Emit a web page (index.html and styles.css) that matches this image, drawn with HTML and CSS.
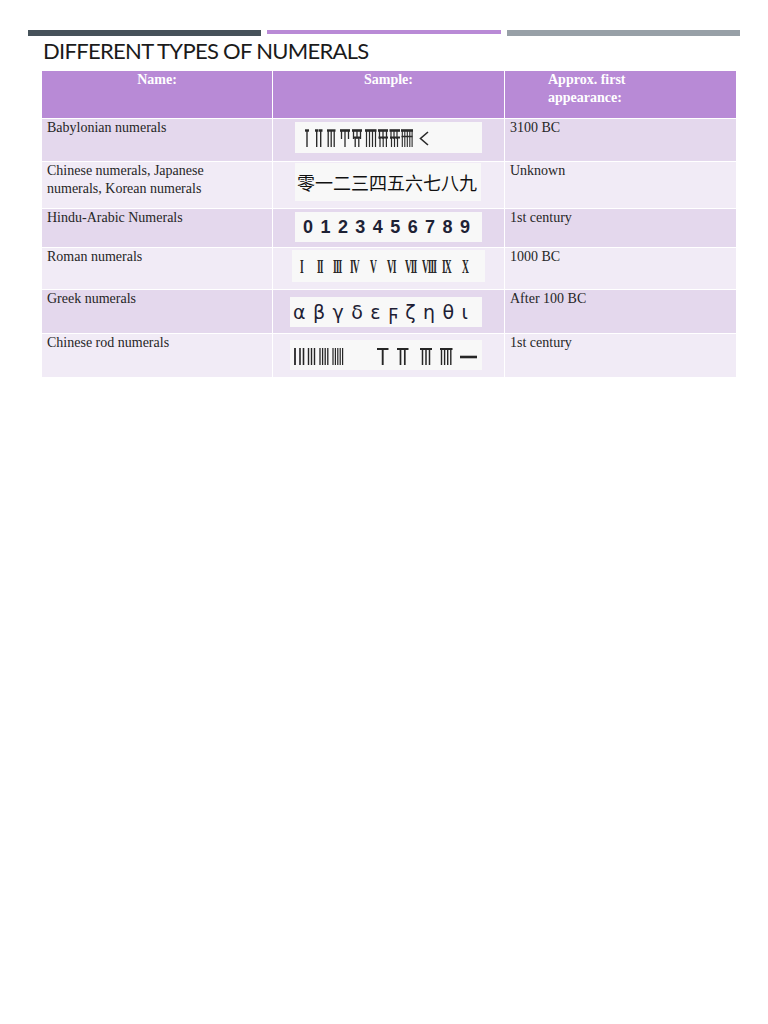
FILE: index.html
```html
<!DOCTYPE html>
<html lang="en">
<head>
<meta charset="utf-8">
<title>Different Types of Numerals</title>
<link rel="stylesheet" href="styles.css">
</head>
<body>
<div class="bars">
  <div class="bar bar-dark"></div>
  <div class="bar bar-purple"></div>
  <div class="bar bar-gray"></div>
</div>
<h1 class="title">DIFFERENT TYPES OF NUMERALS</h1>
<table class="numerals">
  <colgroup>
    <col class="c1"><col class="c2"><col class="c3">
  </colgroup>
  <thead>
    <tr class="head">
      <th class="h-center">Name:</th>
      <th class="h-center">Sample:</th>
      <th class="h-left">Approx. first<br>appearance:</th>
    </tr>
  </thead>
  <tbody>
    <tr class="r1 odd">
      <td class="name">Babylonian numerals</td>
      <td class="sample">
        <div class="box box-bab">
          <svg width="187" height="31" viewBox="0 0 187 31" class="glyph-svg">
            <g stroke="#2a2a2a" fill="none">
              <path d="M10 8.5h4" stroke-width="2.4"/><path d="M12 8v17" stroke-width="1.4"/>
              <path d="M20 8.5h3.5M24 8.5h3.5" stroke-width="2.4"/><path d="M21.7 8v17M25.7 8v17" stroke-width="1.4"/>
              <path d="M32 8.5h8.5" stroke-width="2.4"/><path d="M33.2 8v17M36.2 8v17M39.2 8v17" stroke-width="1.3"/>
              <path d="M45 8.5h10" stroke-width="2.6"/><path d="M46.5 8v9M50 8v17M53.5 8v9" stroke-width="1.3"/>
              <path d="M57 8.5h10" stroke-width="2.6"/><path d="M58.5 8v9M62 8v9M65.5 8v9" stroke-width="1.3"/><path d="M59 15.5h6" stroke-width="2"/><path d="M60.2 15v10M63.8 15v10" stroke-width="1.3"/>
              <path d="M70 8.5h11.5" stroke-width="2.6"/><path d="M71.5 8v17M74.5 8v17M77.5 8v17M80.5 8v17" stroke-width="1.2"/>
              <path d="M83 8.5h10" stroke-width="2.6"/><path d="M84.5 8v9M88 8v9M91.5 8v9" stroke-width="1.3"/><path d="M83.5 15.5h9.5" stroke-width="2"/><path d="M85 15v10M88.2 15v10M91.4 15v10" stroke-width="1.2"/>
              <path d="M94.5 8.5h10.5" stroke-width="2.6"/><path d="M96 8v9M99 8v9M102 8v9" stroke-width="1.2"/><path d="M95 15.5h10" stroke-width="2"/><path d="M96.5 15v10M99.5 15v10M102.5 15v10" stroke-width="1.2"/>
              <path d="M106 8.5h12" stroke-width="2.6"/><path d="M107.3 8v17M109.8 8v17M112.3 8v17M114.8 8v17M117.1 8v17" stroke-width="1.1"/><path d="M106.5 14.5h11" stroke-width="1.5"/>
              <path d="M133 10l-7.5 6.5 7.5 6.5" stroke-width="1.6"/>
            </g>
          </svg>
        </div>
      </td>
      <td class="date">3100 BC</td>
    </tr>
    <tr class="r2 even">
      <td class="name name-wrap">Chinese numerals, Japanese numerals, Korean numerals</td>
      <td class="sample">
        <div class="box box-cjk">
          <div class="glyphs glyphs-cjk"><span>零</span><span>一</span><span>二</span><span>三</span><span>四</span><span>五</span><span>六</span><span>七</span><span>八</span><span>九</span></div>
        </div>
      </td>
      <td class="date">Unknown</td>
    </tr>
    <tr class="r3 odd">
      <td class="name">Hindu-Arabic Numerals</td>
      <td class="sample">
        <div class="box box-arabic">
          <div class="glyphs glyphs-arabic"><span>0</span><span>1</span><span>2</span><span>3</span><span>4</span><span>5</span><span>6</span><span>7</span><span>8</span><span>9</span></div>
        </div>
      </td>
      <td class="date">1st century</td>
    </tr>
    <tr class="r4 even">
      <td class="name">Roman numerals</td>
      <td class="sample">
        <div class="box box-roman">
          <svg width="193" height="32" viewBox="0 0 193 32" class="glyph-svg">
            <g class="roman-text" fill="#262626" transform="scale(0.5 1)">
              <text x="16" y="23">I</text>
              <text x="50" y="23">II</text>
              <text x="82" y="23">III</text>
              <text x="116" y="23">IV</text>
              <text x="156" y="23">V</text>
              <text x="190" y="23">VI</text>
              <text x="226" y="23">VII</text>
              <text x="260" y="23">VIII</text>
              <text x="300" y="23">IX</text>
              <text x="340" y="23">X</text>
            </g>
          </svg>
        </div>
      </td>
      <td class="date">1000 BC</td>
    </tr>
    <tr class="r5 odd">
      <td class="name">Greek numerals</td>
      <td class="sample">
        <div class="box box-greek">
          <div class="glyphs glyphs-greek"><span>α</span><span>β</span><span>γ</span><span>δ</span><span>ε</span><span class="digamma">ϝ</span><span>ζ</span><span>η</span><span>θ</span><span>ι</span></div>
        </div>
      </td>
      <td class="date">After 100 BC</td>
    </tr>
    <tr class="r6 even">
      <td class="name">Chinese rod numerals</td>
      <td class="sample">
        <div class="box box-rod">
          <svg width="192" height="30" viewBox="0 0 192 30" class="glyph-svg">
            <g stroke="#262626" fill="none">
              <path d="M5 8v17" stroke-width="1.8"/>
              <path d="M10 8v17M13.5 8v17" stroke-width="1.6"/>
              <path d="M18.5 8v17M21.5 8v17M24.5 8v17" stroke-width="1.4"/>
              <path d="M30 8v17M32.6 8v17M35.2 8v17M37.8 8v17" stroke-width="1.3"/>
              <path d="M43 8v17M45.4 8v17M47.8 8v17M50.2 8v17M52.6 8v17" stroke-width="1.2"/>
              <path d="M87 9h11.5" stroke-width="2"/><path d="M92.7 9v16" stroke-width="1.9"/>
              <path d="M107 9h11.5" stroke-width="2"/><path d="M110.5 9v16M114.8 9v16" stroke-width="1.7"/>
              <path d="M130 9h12" stroke-width="2"/><path d="M132.5 9v16M136 9v16M139.5 9v16" stroke-width="1.5"/>
              <path d="M150 9h12.5" stroke-width="2"/><path d="M151.5 9v16M154.6 9v16M157.7 9v16M160.8 9v16" stroke-width="1.4"/>
              <path d="M170 17h17" stroke-width="2.6"/>
            </g>
          </svg>
        </div>
      </td>
      <td class="date">1st century</td>
    </tr>
  </tbody>
</table>
</body>
</html>
```

FILE: styles.css
```css
html, body {
  margin: 0;
  padding: 0;
  background: #ffffff;
}

body {
  width: 768px;
  min-height: 1024px;
  font-family: "Liberation Serif", "Times New Roman", serif;
}

.bars {
  display: flex;
  align-items: flex-start;
  gap: 6px;
  padding: 30px 0 0 28px;
  height: 6px;
}

.bar {
  width: 233px;
  height: 6px;
}

.bar-dark {
  background: #46525a;
}

.bar-purple {
  width: 234px;
  height: 4px;
  background: #b98ad6;
}

.bar-gray {
  background: #98a0a7;
}

.title {
  margin: 0 0 0 43px;
  font-family: "Lato", "Open Sans", sans-serif;
  font-weight: 400;
  font-size: 22px;
  line-height: 29px;
  letter-spacing: -0.7px;
  color: #1b1b1b;
}

.numerals {
  margin: 5px 0 0 41px;
  border-collapse: separate;
  border-spacing: 1px;
  table-layout: fixed;
  width: 696px;
  font-size: 14px;
  line-height: 18px;
}

.c1 { width: 230px; }
.c2 { width: 231px; }
.c3 { width: 231px; }

.numerals th,
.numerals td {
  padding: 0 5px;
  vertical-align: top;
}

.head th {
  background: #b88ad6;
  color: #ffffff;
  font-weight: 700;
  height: 47px;
}

.h-center {
  text-align: center;
}

.h-left {
  text-align: left;
}

.numerals th.h-left {
  padding-left: 43px;
}

.odd td {
  background: #e4d8ed;
}

.even td {
  background: #f1ebf6;
}

.numerals td {
  color: #262626;
}

.numerals td.name-wrap {
  padding-right: 20px;
}

.r1 td { height: 42px; }
.r2 td { height: 46px; }
.r3 td { height: 38px; }
.r4 td { height: 41px; }
.r5 td { height: 43px; }
.r6 td { height: 43px; }

.numerals td.sample {
  padding: 0;
}

.box {
  background: #f8f8f8;
  display: flex;
  align-items: center;
  overflow: hidden;
}

.glyph-svg {
  display: block;
}

.box-bab {
  margin: 3px 0 0 22px;
  width: 187px;
  height: 31px;
}

.box-cjk {
  margin: 1px 0 0 22px;
  width: 186px;
  height: 38px;
}

.box-arabic {
  margin: 3px 0 0 22px;
  width: 187px;
  height: 30px;
}

.box-roman {
  margin: 2px 0 0 19px;
  width: 193px;
  height: 32px;
}

.box-greek {
  margin: 7px 0 0 17px;
  width: 192px;
  height: 30px;
}

.box-rod {
  margin: 6px 0 0 17px;
  width: 192px;
  height: 30px;
}

.glyphs {
  display: flex;
  justify-content: space-between;
  align-items: center;
}

.glyphs-cjk {
  margin-left: 2px;
  width: 175px;
  font-family: "Noto Sans CJK SC", "Noto Sans CJK JP", sans-serif;
  font-size: 18px;
  line-height: 20px;
  color: #111111;
}

.glyphs-arabic {
  margin-left: 8px;
  width: 167px;
  font-family: "Liberation Sans", Arial, sans-serif;
  font-weight: 700;
  font-size: 18px;
  line-height: 20px;
  color: #1e2235;
}

.glyphs-greek {
  margin-left: 3px;
  width: 175px;
  font-family: "DejaVu Sans", "Noto Sans", sans-serif;
  font-size: 19px;
  line-height: 22px;
  color: #1e1e35;
}

.digamma {
  font-family: "Noto Sans", "DejaVu Sans", sans-serif;
}

.roman-text {
  font-family: "Liberation Serif", "Times New Roman", serif;
  font-weight: 700;
  font-size: 19px;
  letter-spacing: -2px;
}
```
